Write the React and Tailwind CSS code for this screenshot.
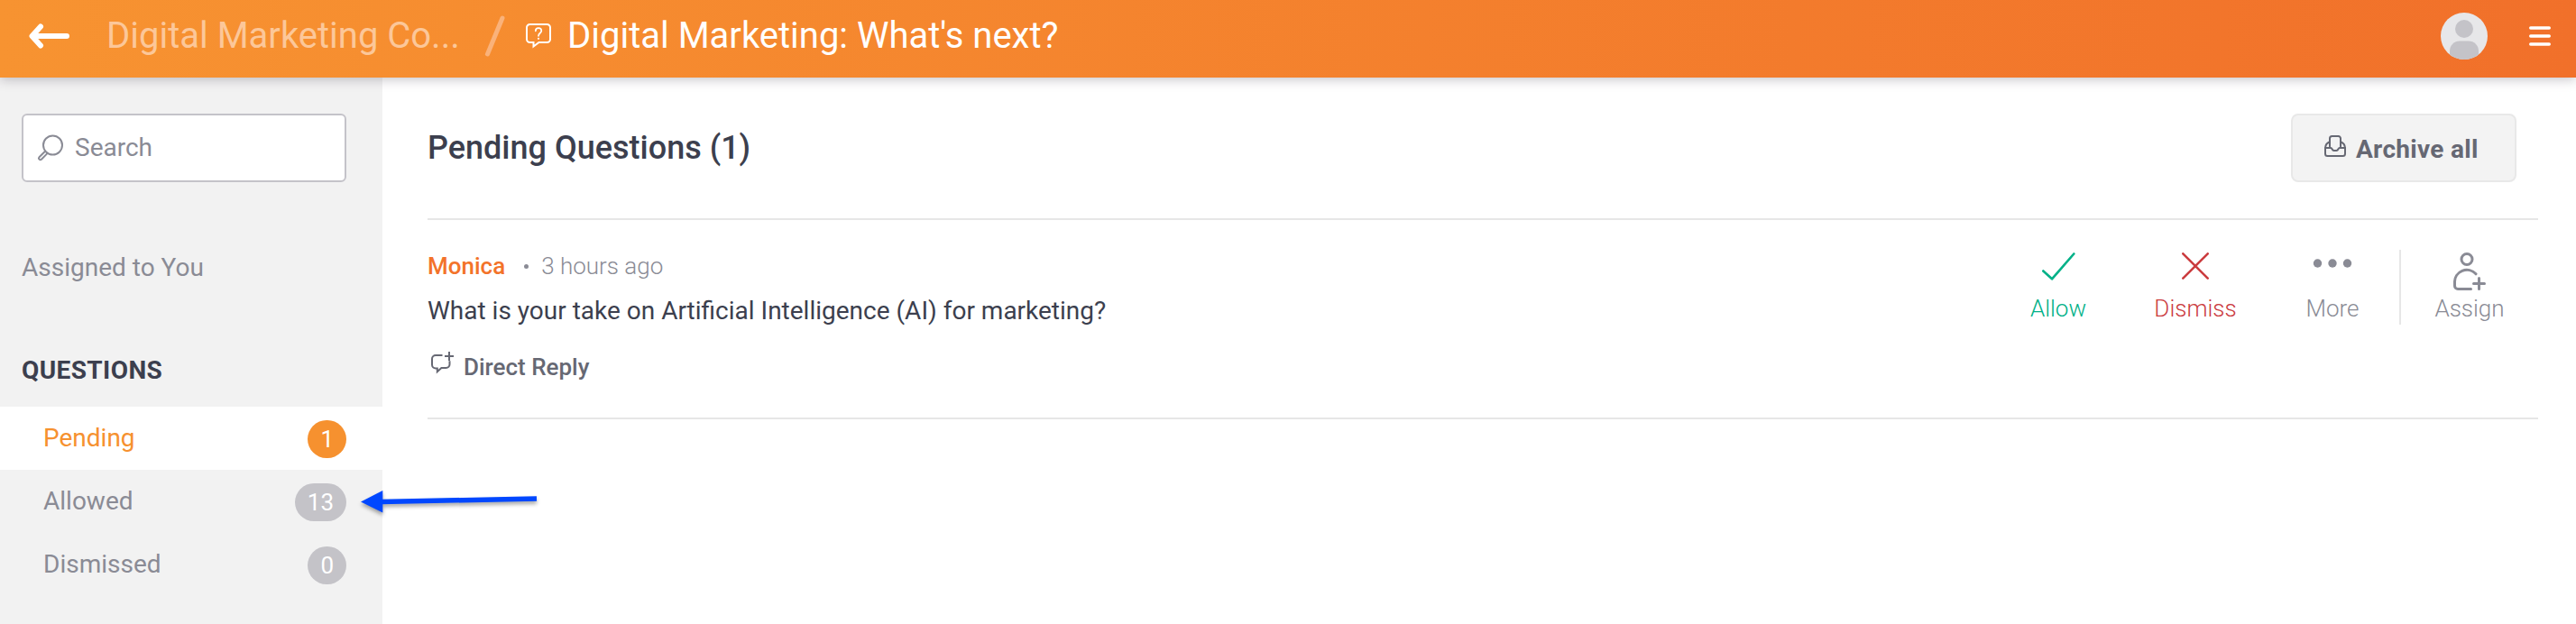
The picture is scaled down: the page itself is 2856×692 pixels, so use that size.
import React from 'react';

const filters = [
  { label: 'Pending', count: 1, active: true },
  { label: 'Allowed', count: 13 },
  { label: 'Dismissed', count: 0 },
];

const BackIcon = () => (
  <svg width="46" height="28" viewBox="0 0 46 28" fill="none" stroke="#fff" strokeWidth="6" strokeLinecap="round" strokeLinejoin="round">
    <path d="M42 14H5M13 3.500L3.500 14l9.500 10.500" />
  </svg>
);

const QuestionBubbleIcon = () => (
  <svg width="28" height="28" viewBox="0 0 28 28" fill="none" stroke="#fff" strokeWidth="2" strokeLinecap="round">
    <path d="M4.500 1h19a3.500 3.500 0 0 1 3.500 3.500v13a3.500 3.500 0 0 1-3.500 3.500H14.500L8.500 25.500V21h-4A3.500 3.500 0 0 1 1 17.500v-13A3.500 3.500 0 0 1 4.500 1z" />
    <path d="M10.800 8.300c0-2 1.400-3.200 3.200-3.200s3.300 1.200 3.300 3c0 2.700-3.300 2.600-3.300 5.700" strokeWidth="1.700" />
    <circle cx="14" cy="16.800" r="1.100" fill="#fff" stroke="none" />
  </svg>
);

const SearchIcon = () => (
  <svg width="30" height="30" viewBox="0 0 30 30" fill="none" stroke="#8a8b95" strokeWidth="2" strokeLinejoin="round">
    <circle cx="17.500" cy="12" r="10.500" />
    <path d="M9.300 18.500l-6.800 6.800a1.700 1.700 0 0 0 2.400 2.400l6.800-6.800" />
  </svg>
);

const ArchiveIcon = () => (
  <svg width="24" height="24" viewBox="0 0 24 24" fill="none" stroke="#666873" strokeWidth="2" strokeLinejoin="round" strokeLinecap="round">
    <path d="M6 12.500V3.500A2.500 2.500 0 0 1 8.500 1h7A2.500 2.500 0 0 1 18 3.500v9" />
    <path d="M1 14h6.200c1.400 0 1.300 3 3.300 3h3c2 0 1.900-3 3.300-3H23v6.500a2.500 2.500 0 0 1-2.500 2.500h-17A2.500 2.500 0 0 1 1 20.500z" />
    <path d="M1 14c.2-2.500 2-5.500 4.500-6.500M23 14c-.2-2.500-2-5.500-4.500-6.500" />
  </svg>
);

const ReplyIcon = () => (
  <svg width="26" height="26" viewBox="0 0 26 26" fill="none" stroke="#666873" strokeWidth="2">
    <path d="M12.500 5H5a4 4 0 0 0-4 4v6.500a4 4 0 0 0 4 4h1.800v3.700l4.600-4.300h5.100a4 4 0 0 0 4-4v-3.600M15 6h10M20 1v10" />
  </svg>
);

const Avatar = () => (
  <svg width="52" height="52" viewBox="0 0 52 52">
    <defs>
      <clipPath id="avatar-clip">
        <circle cx="26" cy="26" r="26" />
      </clipPath>
    </defs>
    <g clipPath="url(#avatar-clip)">
      <rect width="52" height="52" fill="#e7e7e9" />
      <circle cx="26" cy="18" r="10" fill="#c4c3c8" />
      <rect x="10" y="31.500" width="32" height="28" rx="11" fill="#c4c3c8" />
    </g>
  </svg>
);

const MenuIcon = () => (
  <svg width="24" height="24" viewBox="0 0 24 24" stroke="#fff" strokeWidth="3.400" strokeLinecap="round">
    <path d="M1.700 3h20.600M1.700 12h20.600M1.700 21h20.600" />
  </svg>
);

const CheckIcon = () => (
  <svg width="38" height="42" viewBox="0 0 38 42" fill="none" stroke="#00b188" strokeWidth="2.600" strokeLinecap="round" strokeLinejoin="round">
    <path d="M2.300 20.500l9.700 8.800L36.300 1.500" />
  </svg>
);

const CrossIcon = () => (
  <svg width="30" height="42" viewBox="0 0 30 42" fill="none" stroke="#cb3c3f" strokeWidth="2.600" strokeLinecap="round">
    <path d="M1.300 1.300l27.400 27.400M28.700 1.300L1.300 28.700" />
  </svg>
);

const DotsIcon = () => (
  <svg width="44" height="42" viewBox="0 0 44 42" fill="#8a8b95">
    <circle cx="5.500" cy="12" r="4.700" />
    <circle cx="22" cy="12" r="4.700" />
    <circle cx="38.500" cy="12" r="4.700" />
  </svg>
);

const AssignIcon = () => (
  <svg width="36" height="42" viewBox="0 0 36 42" fill="none" stroke="#8a8b95" strokeWidth="3" strokeLinecap="round" strokeLinejoin="round">
    <circle cx="15" cy="7.500" r="6" />
    <path d="M25 23.800A13.500 13.500 0 0 0 1.500 33.500v3.500a3.500 3.500 0 0 0 3.500 3.500h14.500" />
    <path d="M22.500 34.500h12M28.500 28.500v12" />
  </svg>
);

const actions = [
  { label: 'Allow', icon: CheckIcon, className: 'w-[152px] text-[#00b188]' },
  { label: 'Dismiss', icon: CrossIcon, className: 'w-[152px] text-[#cb3c3f]' },
  { label: 'More', icon: DotsIcon, className: 'w-[152px] border-r-2 border-[#e6e6e6] pl-[2px] text-[#8a8b95]' },
  { label: 'Assign', icon: AssignIcon, className: 'w-[152px] text-[#8a8b95]' },
];

const Header = () => (
  <header className="relative z-10 flex h-[86px] shrink-0 items-center bg-linear-to-r from-[#f79331] to-[#f1702a] pr-7 pb-[6px] pl-8 text-[40px] leading-none text-white shadow-[0_2px_12px_rgba(60,50,70,0.3)]">
    <BackIcon />
    <span className="ml-10 w-[393px] whitespace-nowrap text-[#fcc799]">Digital Marketing Co...</span>
    <svg className="ml-[26px]" width="24" height="46" viewBox="0 0 24 46" stroke="#fab27a" strokeWidth="5" strokeLinecap="round">
      <path d="M3.500 43L20 3" />
    </svg>
    <div className="mr-[18px] ml-[22px]">
      <QuestionBubbleIcon />
    </div>
    <h1 className="whitespace-nowrap">Digital Marketing: What's next?</h1>
    <div className="ml-auto flex items-center gap-[46px]">
      <Avatar />
      <MenuIcon />
    </div>
  </header>
);

const Sidebar = () => (
  <aside className="relative w-[424px] shrink-0 bg-[#f2f2f2] pt-10 text-[28px] leading-none text-[#8a8b95]">
    <div className="mx-6 mr-10 flex h-[76px] items-center rounded-md border-2 border-[#c4c3c9] bg-white pl-[15px]">
      <SearchIcon />
      <span className="ml-3">Search</span>
    </div>
    <p className="mt-[81px] ml-6">Assigned to You</p>
    <h2 className="mt-[86px] ml-6 font-bold tracking-[0.4px] text-[#3c3f4e]">QUESTIONS</h2>
    <ul className="mt-[26px]">
      {filters.map(({ label, count, active }) => (
        <li
          key={label}
          className={`flex h-[70px] items-center justify-between pr-10 pl-12 ${active ? 'bg-white text-[#f6912f]' : ''}`}
        >
          <span>{label}</span>
          <span
            className={`mt-[2px] flex h-[42px] items-center rounded-full px-[14px] text-[26px] text-white ${active ? 'bg-[#f6912f]' : 'bg-[#c4c3c8]'}`}
          >
            {count}
          </span>
        </li>
      ))}
    </ul>

    {/* Callout arrow pointing at the allowed counter */}
    <svg className="absolute top-[450px] left-[396px] overflow-visible drop-shadow-[0_3px_2px_rgba(0,0,0,0.35)]" width="204" height="40" viewBox="0 0 204 40">
      <path d="M26 20.500L199 17" stroke="#0047ff" strokeWidth="5.500" />
      <path d="M4 20.500L28.300 8v24.500z" fill="#0047ff" />
    </svg>
  </aside>
);

const Question = () => (
  <article className="flex h-[223px] justify-between border-y-2 border-[#e6e6e6] pt-[33px]">
    <div className="pt-[5px] leading-none">
      <p className="flex items-center text-[26px]">
        <span className="font-medium text-[#f3732a]">Monica</span>
        <span className="mr-[14px] ml-[21px] size-[5px] rounded-full bg-[#8a8b95]" />
        <span className="font-light text-[#8a8b95]">3 hours ago</span>
      </p>
      <p className="mt-[23px] text-[28px] text-[#3c3f4e]">
        What is your take on Artificial Intelligence (AI) for marketing?
      </p>
      <button className="mt-[30px] ml-[4px] flex text-[26px] font-medium text-[#666873]">
        <ReplyIcon />
        <span className="ml-[10px] pt-[5px]">Direct Reply</span>
      </button>
    </div>
    <div className="flex h-[83px] text-[26px] leading-none font-light">
      {actions.map(({ label, icon: Icon, className }) => (
        <button key={label} className={`flex flex-col items-center pt-[3px] ${className}`}>
          <Icon />
          <span className="mt-[7px]">{label}</span>
        </button>
      ))}
    </div>
  </article>
);

const App = () => (
  <div className="flex h-[692px] w-[2856px] flex-col overflow-hidden bg-white font-['Roboto',sans-serif]">
    <Header />
    <div className="flex flex-1">
      <Sidebar />
      <main className="flex-1 pt-10 pr-[42px] pl-[50px]">
        <div className="mb-10 flex h-[76px] items-center justify-between pr-6">
          <h2 className="text-[36px] leading-none font-medium text-[#3c3f4e]">Pending Questions (1)</h2>
          <button className="flex h-[76px] w-[250px] items-center rounded-lg border-2 border-[#e8e8e8] bg-[#f3f3f3] pl-[35px] text-[28px] leading-none font-bold tracking-[0.3px] text-[#666873]">
            <span className="pb-1">
              <ArchiveIcon />
            </span>
            <span className="ml-[11px] pt-1">Archive all</span>
          </button>
        </div>
        <Question />
      </main>
    </div>
  </div>
);

export default App;
